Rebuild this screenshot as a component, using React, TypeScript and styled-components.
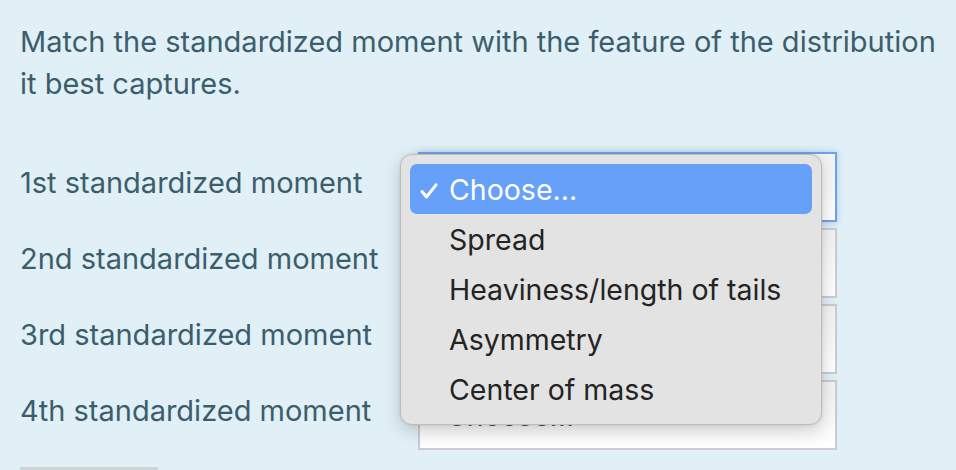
import styled, { createGlobalStyle } from 'styled-components'

const moments = ['1st', '2nd', '3rd', '4th']
const options = [
  'Choose...',
  'Spread',
  'Heaviness/length of tails',
  'Asymmetry',
  'Center of mass',
]

export default function App() {
  return (
    <>
      <GlobalStyle />
      <Page>
        <Intro>
          Match the standardized moment with the feature of the distribution it
          best captures.
        </Intro>
        <Form>
          {moments.map((m, i) => (
            <Row key={m}>
              <Label>{m} standardized moment</Label>
              <SelectBox $focused={i === 0}>
                <span>Choose...</span>
                <Chevron viewBox="0 0 12 8" aria-hidden>
                  <path d="M1 1.5 6 6.5 11 1.5" />
                </Chevron>
                {i === 0 && (
                  <Menu>
                    {options.map((o, j) => (
                      <MenuItem key={o} $active={j === 0}>
                        <Check>
                          {j === 0 && (
                            <svg viewBox="0 0 18 16" aria-hidden>
                              <path d="M2 8.5 6.5 14 16 1.8" />
                            </svg>
                          )}
                        </Check>
                        {o}
                      </MenuItem>
                    ))}
                  </Menu>
                )}
              </SelectBox>
            </Row>
          ))}
        </Form>
        <SubmitButton>Check</SubmitButton>
      </Page>
    </>
  )
}

const GlobalStyle = createGlobalStyle`
  html, body {
    margin: 0;
    padding: 0;
    background: #e1eff7;
    overflow: hidden;
  }
  * {
    box-sizing: border-box;
  }
`

const Page = styled.div`
  padding: 21px 20px 0;
  font-family: Inter, 'Liberation Sans', sans-serif;
  color: #3b5e6d;
`

const Intro = styled.p`
  margin: 0 0 47px;
  font-size: 29px;
  line-height: 42px;
  width: 916px;
`

const Form = styled.div`
  display: flex;
  flex-direction: column;
  gap: 6px;
`

const Row = styled.div`
  display: grid;
  grid-template-columns: 398px 419px;
  align-items: center;
  height: 70px;
`

const Label = styled.div`
  font-size: 29px;
  padding-bottom: 9px;
`

const SelectBox = styled.div<{ $focused?: boolean }>`
  position: relative;
  height: 70px;
  display: flex;
  align-items: center;
  justify-content: space-between;
  padding: 0 30px 0 26px;
  background: linear-gradient(#f2f2f2, #ffffff);
  border: 2px solid ${(p) => (p.$focused ? '#6fa3e6' : '#cacccf')};
  box-shadow: ${(p) => (p.$focused ? '0 0 6px rgba(90, 150, 220, 0.45)' : 'none')};
  font-size: 28.5px;
  color: #4a4a4a;
`

const Chevron = styled.svg`
  width: 12px;
  height: 8px;
  fill: none;
  stroke: #333;
  stroke-width: 1.8;
`

const Menu = styled.div`
  position: absolute;
  left: -20px;
  top: 0px;
  width: 422px;
  padding: 9px 9px 10px;
  background: #e3e3e3;
  border: 1px solid #bdbdbd;
  border-radius: 12px;
  box-shadow: 0 6px 18px rgba(0, 0, 0, 0.18), 0 0 3px rgba(0, 0, 0, 0.1);
  z-index: 2;
`

const MenuItem = styled.div<{ $active?: boolean }>`
  display: flex;
  align-items: center;
  height: 50px;
  border-radius: 7px;
  padding-left: 10px;
  font-size: 28.5px;
  background: ${(p) => (p.$active ? '#66a0f8' : 'transparent')};
  color: ${(p) => (p.$active ? '#ffffff' : '#242424')};
`

const Check = styled.span`
  display: inline-flex;
  align-items: center;
  width: 29px;
  padding-top: 3px;
  svg {
    width: 18px;
    height: 16px;
    fill: none;
    stroke: #ffffff;
    stroke-width: 3;
    stroke-linecap: round;
    stroke-linejoin: round;
  }
`

const SubmitButton = styled.button`
  margin-top: 17px;
  width: 138px;
  height: 44px;
  border: none;
  background: #cdd3d7;
  font-family: Inter, 'Liberation Sans', sans-serif;
  font-size: 20px;
  color: #333;
`
